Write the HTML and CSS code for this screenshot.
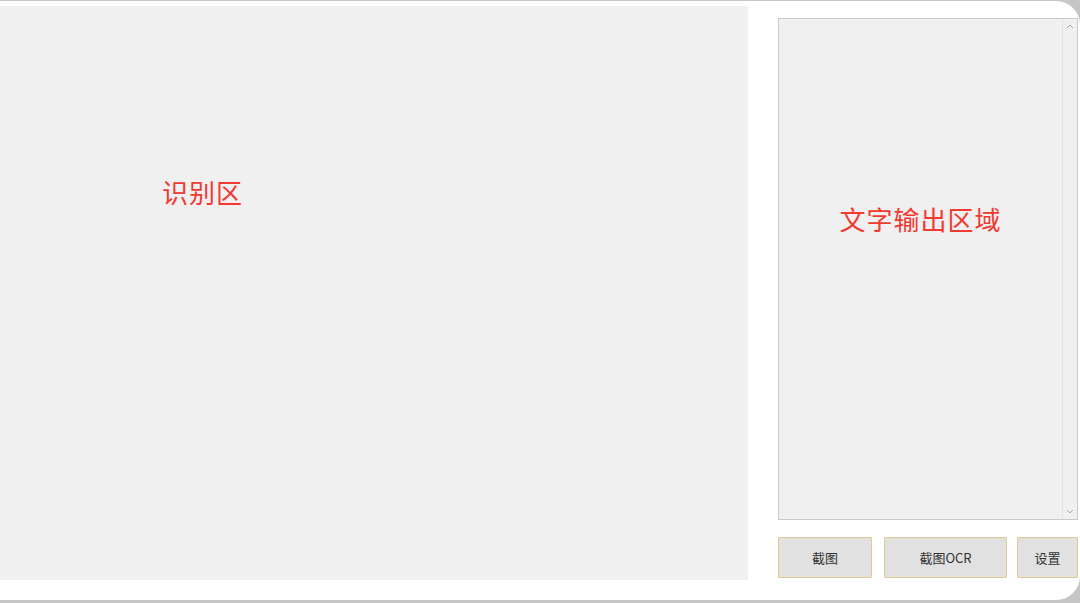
FILE: index.html
```html
<!DOCTYPE html>
<html lang="zh-CN">
<head>
<meta charset="utf-8">
<title>OCR</title>
<link rel="stylesheet" href="styles.css">
</head>
<body>
<div class="window">
  <div class="recog">
    <span class="label">识别区</span>
  </div>
  <div class="side">
    <div class="output">
      <div class="output-text"><span class="label">文字输出区域</span></div>
      <div class="scrollbar">
        <svg class="arrow" width="8" height="5" viewBox="0 0 8 5"><path d="M1 4 L4 1 L7 4" fill="none" stroke="#a8a8a8" stroke-width="1"/></svg>
        <svg class="arrow" width="8" height="5" viewBox="0 0 8 5"><path d="M1 1 L4 4 L7 1" fill="none" stroke="#a8a8a8" stroke-width="1"/></svg>
      </div>
    </div>
    <div class="buttons">
      <button class="btn btn-shot">截图</button>
      <button class="btn btn-ocr">截图OCR</button>
      <button class="btn btn-set">设置</button>
    </div>
  </div>
</div>
</body>
</html>
```

FILE: styles.css
```css
* { box-sizing: border-box; }
html, body { margin: 0; padding: 0; }
body {
  width: 1080px;
  height: 603px;
  background: #c6c6c6;
  overflow: hidden;
  font-family: "Noto Sans CJK SC", "Noto Sans", sans-serif;
}
.window {
  margin-top: 1px;
  width: 1080px;
  height: 599px;
  background: #ffffff;
  border-radius: 0 24px 24px 0;
  display: flex;
  align-items: flex-start;
  padding-top: 5px;
  gap: 30px;
}
.recog {
  width: 748px;
  height: 574px;
  background: #f0f0f0;
  padding: 168px 0 0 162px;
}
.label {
  color: #f03a32;
  font-size: 26px;
  line-height: 36px;
  letter-spacing: 1px;
}
.side {
  margin-top: 12px;
  width: 300px;
  display: flex;
  flex-direction: column;
  gap: 17px;
}
.output {
  height: 502px;
  border: 1px solid #c9c9c9;
  background: #f0f0f0;
  display: flex;
}
.output-text {
  flex: 1;
  text-align: center;
  padding-top: 182px;
}
.scrollbar {
  width: 15px;
  border-left: 1px solid #e4e4e4;
  background: #f0f0f0;
  display: flex;
  flex-direction: column;
  justify-content: space-between;
  align-items: center;
  padding: 5px 0 5px;
}
.arrow { display: block; }
.buttons {
  display: flex;
}
.btn {
  height: 41px;
  background: #e1e1e1;
  border: 1px solid #d9c9a3;
  border-radius: 1px;
  box-shadow: inset 0 0 0 1px #e9e2cf;
  color: #333333;
  font-family: "Noto Sans CJK SC", "Noto Sans", sans-serif;
  font-size: 13px;
  padding: 0;
}
.btn-shot { width: 94px; }
.btn-ocr { width: 123px; margin-left: 12px; }
.btn-set { width: 61px; margin-left: 10px; }
```
